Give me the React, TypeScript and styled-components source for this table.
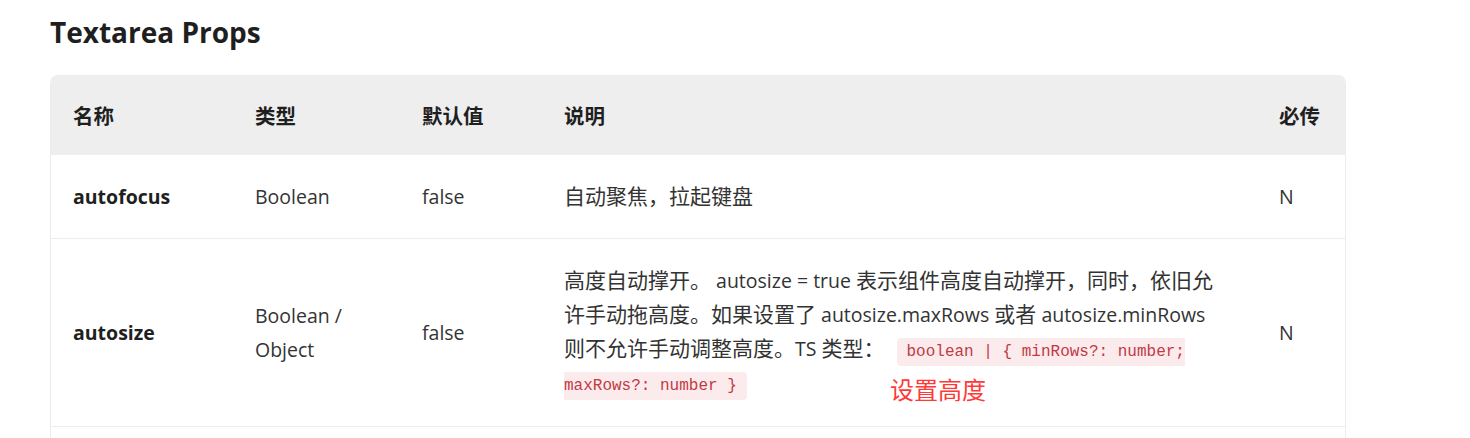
import styled, { createGlobalStyle } from 'styled-components'

const GlobalStyles = createGlobalStyle`
  body {
    margin: 0;
    background: #ffffff;
    font-family: 'Open Sans', 'Noto Sans CJK SC', sans-serif;
    color: #333333;
  }
  * {
    box-sizing: border-box;
  }
`

const Page = styled.div`
  padding: 13px 0 0 50px;
`

const Title = styled.h2`
  margin: 0 0 24px;
  font-size: 28px;
  line-height: 38px;
  font-weight: 700;
  color: #1f1f1f;
`

const TableWrap = styled.div`
  width: 1296px;
  border: 1px solid #ececec;
  border-bottom: none;
  border-radius: 8px 8px 0 0;
  overflow: hidden;
`

const Table = styled.table`
  width: 100%;
  border-collapse: collapse;
  table-layout: fixed;
  font-size: 19.5px;
  line-height: 34px;
`

const HeadRow = styled.tr`
  background: #eeeeee;
`

const Th = styled.th`
  height: 79px;
  padding: 0 22px;
  text-align: left;
  font-weight: 700;
  font-size: 20.5px;
  color: #1f1f1f;
`

const Row = styled.tr`
  border-bottom: 1px solid #ececec;
`

const Td = styled.td<{ $bold?: boolean }>`
  padding: 25px 22px 24px;
  vertical-align: middle;
  font-weight: ${({ $bold }) => ($bold ? 700 : 400)};
  color: ${({ $bold }) => ($bold ? '#1f1f1f' : '#333333')};
`

const DescCell = styled(Td)`
  position: relative;
  padding-right: 35px;
  padding-bottom: 26px;
`

const Zh = styled.span`
  font-size: 21px;
  line-height: 1;
`

const Code = styled.code`
  font-family: 'Liberation Mono', 'DejaVu Sans Mono', monospace;
  font-size: 16px;
  line-height: 1;
  color: #c23a44;
  background: #fcebed;
  border-radius: 4px;
  padding: 5px 10px;
  margin-left: 12px;
`

const Note = styled.span`
  position: absolute;
  left: 348px;
  top: 136px;
  font-size: 24px;
  line-height: 30px;
  color: #ff3838;
`

const EmptyRow = styled.tr`
  height: 12px;
`

function App() {
  return (
    <>
      <GlobalStyles />
      <Page>
        <Title>Textarea Props</Title>
        <TableWrap>
          <Table>
            <colgroup>
              <col style={{ width: 182 }} />
              <col style={{ width: 167 }} />
              <col style={{ width: 142 }} />
              <col style={{ width: 715 }} />
              <col style={{ width: 90 }} />
            </colgroup>
            <thead>
              <HeadRow>
                <Th>名称</Th>
                <Th>类型</Th>
                <Th>默认值</Th>
                <Th>说明</Th>
                <Th>必传</Th>
              </HeadRow>
            </thead>
            <tbody>
              <Row>
                <Td $bold>autofocus</Td>
                <Td>Boolean</Td>
                <Td>false</Td>
                <Td><Zh>自动聚焦，拉起键盘</Zh></Td>
                <Td>N</Td>
              </Row>
              <Row>
                <Td $bold>autosize</Td>
                <Td>Boolean / Object</Td>
                <Td>false</Td>
                <DescCell>
                  <Zh>高度自动撑开。</Zh> autosize = true <Zh>表示组件高度自动撑开，同时，依旧允许手动拖高度。如果设置了</Zh> autosize.maxRows <Zh>或者</Zh> autosize.minRows <Zh>则不允许手动调整高度。</Zh>TS <Zh>类型：</Zh>
                  <Code>boolean | {'{'} minRows?: number; maxRows?: number {'}'}</Code>
                  <Note>设置高度</Note>
                </DescCell>
                <Td>N</Td>
              </Row>
              <EmptyRow>
                <Td />
                <Td />
                <Td />
                <Td />
                <Td />
              </EmptyRow>
            </tbody>
          </Table>
        </TableWrap>
      </Page>
    </>
  )
}

export default App
